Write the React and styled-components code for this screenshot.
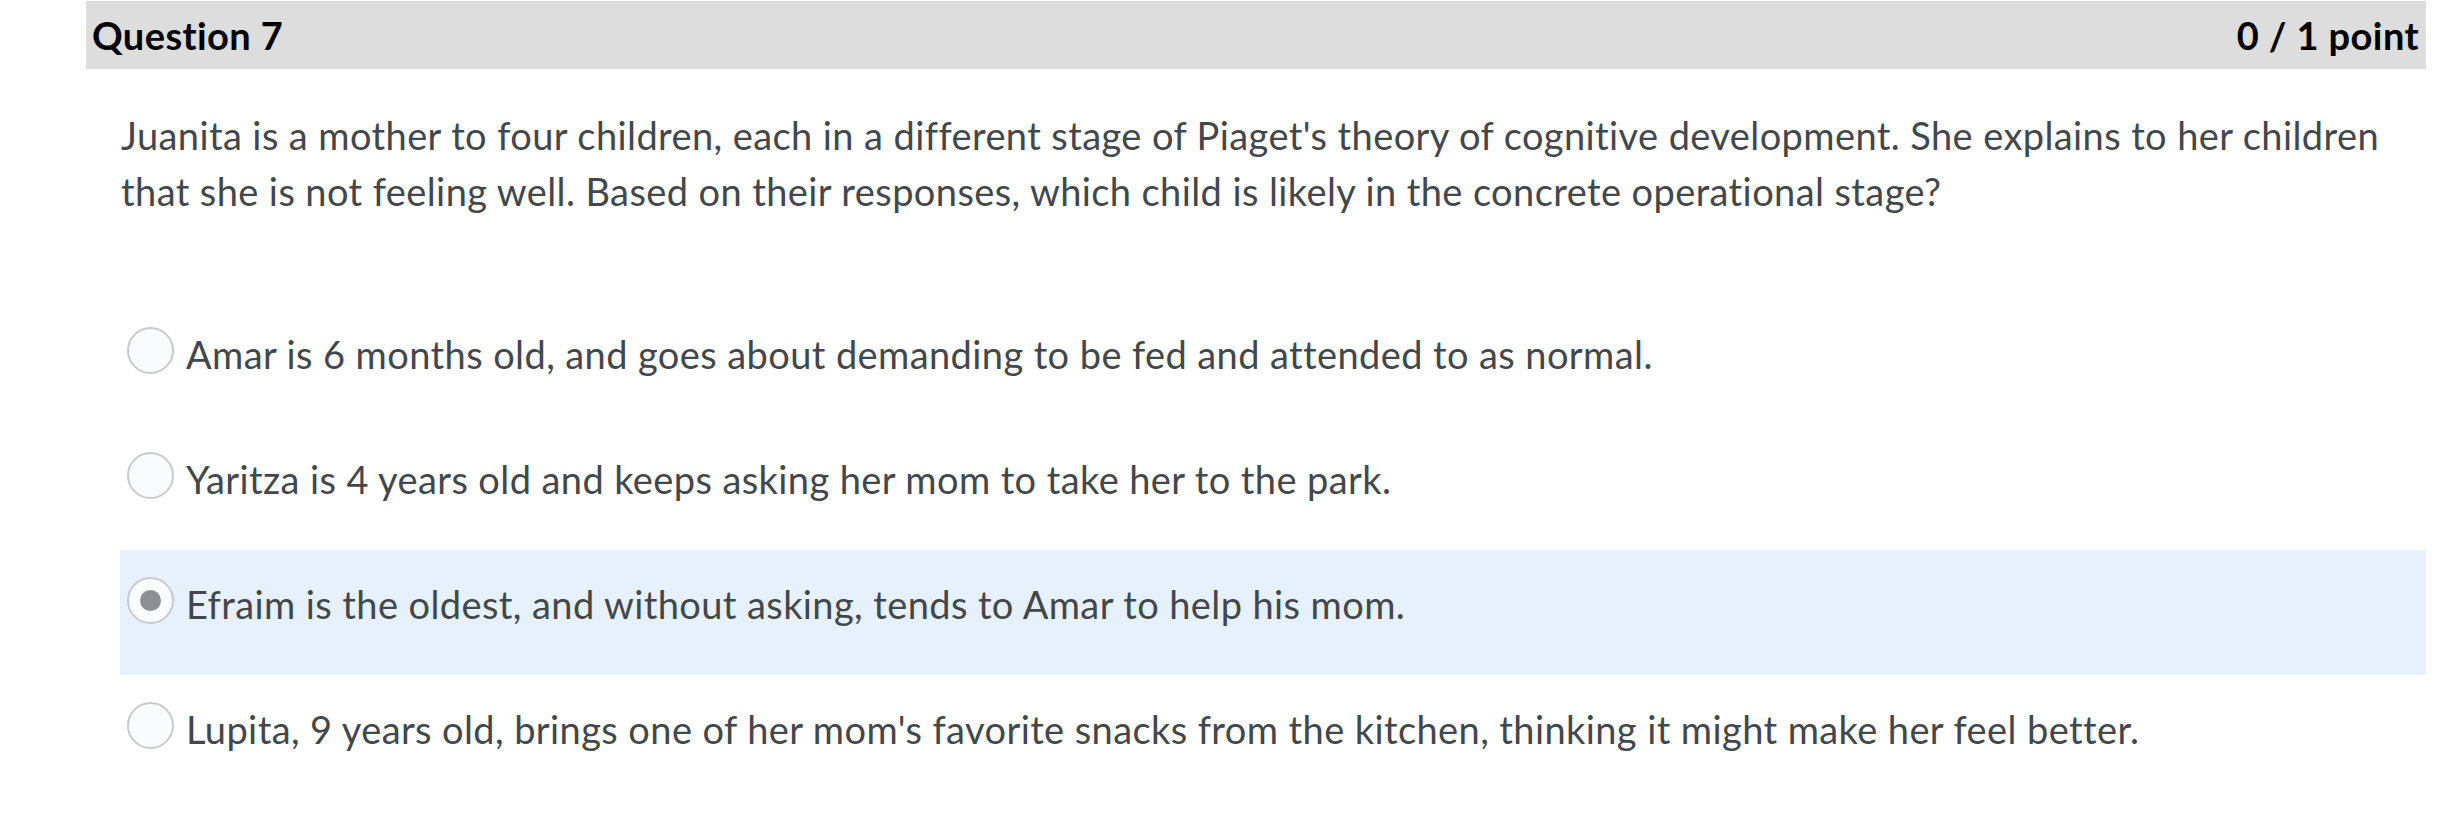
import React, { useState } from 'react';
import styled, { createGlobalStyle } from 'styled-components';

const GlobalStyle = createGlobalStyle`
  body {
    margin: 0;
    background: #ffffff;
    font-family: Lato, "Noto Sans", sans-serif;
  }
`;

const Page = styled.div`
  padding: 1px 34px 0 86px;
`;

const Header = styled.div`
  display: flex;
  justify-content: space-between;
  align-items: center;
  height: 68px;
  padding: 0 7px 0 6px;
  background: #dddddd;
  color: #000000;
  font-size: 38px;
  letter-spacing: 0.4px;
  font-weight: 700;
`;

const Body = styled.div`
  padding: 0 0 0 34px;
`;

const Prompt = styled.p`
  margin: 38px 0 0 1px;
  font-size: 38px;
  letter-spacing: 0.4px;
  line-height: 56px;
  color: #43474b;
`;

const Answers = styled.div`
  margin-top: 81px;
  display: flex;
  flex-direction: column;
`;

const AnswerRow = styled.label`
  display: flex;
  align-items: flex-start;
  gap: 12px;
  height: 125px;
  box-sizing: border-box;
  padding: 26px 0 0 7px;
  background: ${(p) => (p.$selected ? '#e7f1fb' : 'transparent')};
  cursor: pointer;
`;

const Radio = styled.span`
  flex: none;
  display: flex;
  align-items: center;
  justify-content: center;
  width: 47px;
  height: 47px;
  margin-top: 1px;
  box-sizing: border-box;
  border: 2px solid #c8cacc;
  border-radius: 50%;
  background: #fafbfc;

  &::after {
    content: '';
    display: ${(p) => (p.$checked ? 'block' : 'none')};
    width: 21px;
    height: 21px;
    border-radius: 50%;
    background: #8c8f94;
  }
`;

const AnswerText = styled.span`
  font-size: 38px;
  letter-spacing: 0.4px;
  line-height: 56px;
  color: #43474b;
`;

const answers = [
  'Amar is 6 months old, and goes about demanding to be fed and attended to as normal.',
  'Yaritza is 4 years old and keeps asking her mom to take her to the park.',
  'Efraim is the oldest, and without asking, tends to Amar to help his mom.',
  "Lupita, 9 years old, brings one of her mom's favorite snacks from the kitchen, thinking it might make her feel better.",
];

const App = () => {
  const [picked, setPicked] = useState(2);

  return (
    <>
      <GlobalStyle />
      <Page>
        <Header>
          <span>Question 7</span>
          <span>0 / 1 point</span>
        </Header>
        <Body>
          <Prompt>
            Juanita is a mother to four children, each in a different stage of Piaget's theory of
            cognitive development. She explains to her children that she is not feeling well. Based
            on their responses, which child is likely in the concrete operational stage?
          </Prompt>
          <Answers>
            {answers.map((text, index) => (
              <AnswerRow
                key={index}
                $selected={picked === index}
                onClick={() => setPicked(index)}
              >
                <Radio $checked={picked === index} />
                <AnswerText>{text}</AnswerText>
              </AnswerRow>
            ))}
          </Answers>
        </Body>
      </Page>
    </>
  );
};

export default App;
